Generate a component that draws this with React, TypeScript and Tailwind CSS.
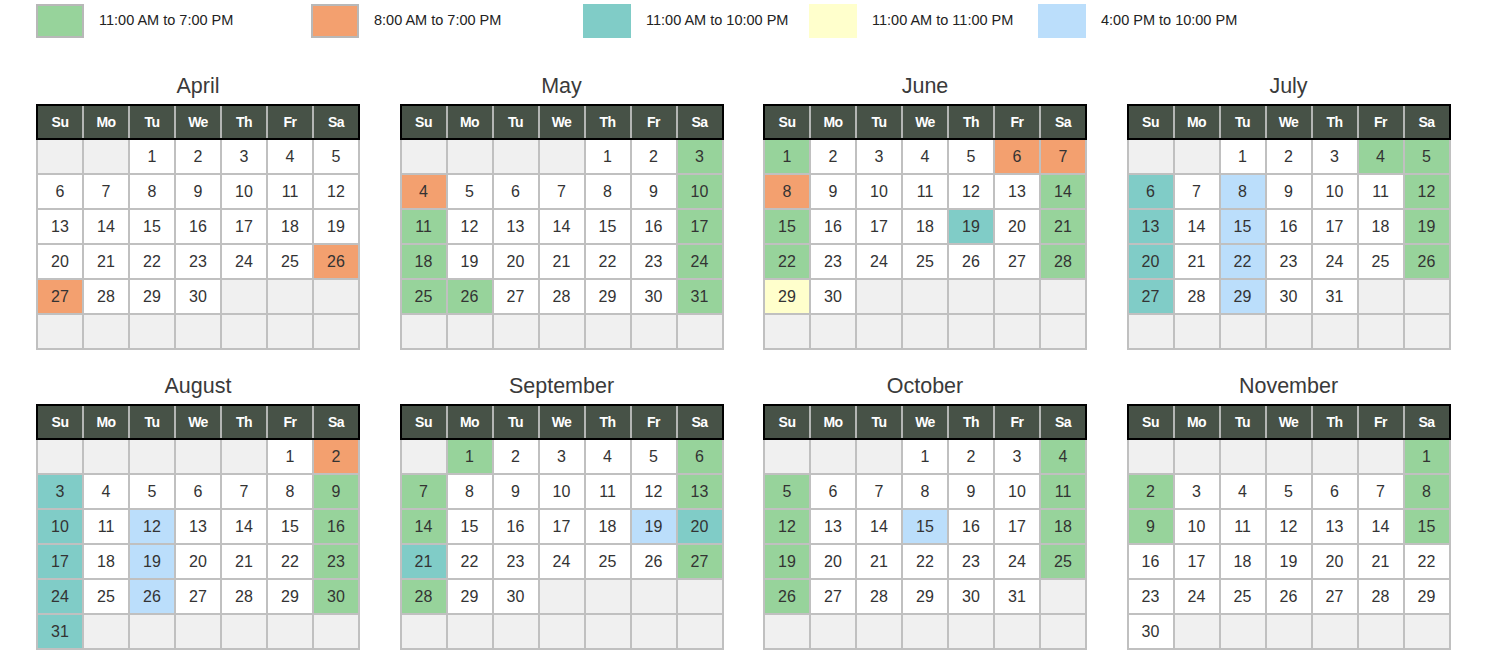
import React from "react";

type Slot = "G" | "O" | "T" | "Y" | "B";

const SLOT_BG: Record<Slot, string> = {
  G: "bg-[#97d39b]",
  O: "bg-[#f3a06f]",
  T: "bg-[#80ccc7]",
  Y: "bg-[#ffffcc]",
  B: "bg-[#bbdefb]",
};

const legend: { slot: Slot; label: string; width: string; bordered: boolean }[] = [
  { slot: "G", label: "11:00 AM to 7:00 PM", width: "w-[275px]", bordered: true },
  { slot: "O", label: "8:00 AM to 7:00 PM", width: "w-[272px]", bordered: true },
  { slot: "T", label: "11:00 AM to 10:00 PM", width: "w-[226px]", bordered: false },
  { slot: "Y", label: "11:00 AM to 11:00 PM", width: "w-[229px]", bordered: false },
  { slot: "B", label: "4:00 PM to 10:00 PM", width: "w-[260px]", bordered: false },
];

// month index (0-based) in 2025 -> highlighted days
const months: { name: string; index: number; marks: Record<number, Slot> }[] = [
  { name: "April", index: 3, marks: { 26: "O", 27: "O" } },
  {
    name: "May",
    index: 4,
    marks: { 3: "G", 4: "O", 10: "G", 11: "G", 17: "G", 18: "G", 24: "G", 25: "G", 26: "G", 31: "G" },
  },
  {
    name: "June",
    index: 5,
    marks: { 1: "G", 6: "O", 7: "O", 8: "O", 14: "G", 15: "G", 19: "T", 21: "G", 22: "G", 28: "G", 29: "Y" },
  },
  {
    name: "July",
    index: 6,
    marks: {
      4: "G", 5: "G", 6: "T", 8: "B", 12: "G", 13: "T", 15: "B", 19: "G",
      20: "T", 22: "B", 26: "G", 27: "T", 29: "B",
    },
  },
  {
    name: "August",
    index: 7,
    marks: {
      2: "O", 3: "T", 9: "G", 10: "T", 12: "B", 16: "G", 17: "T", 19: "B",
      23: "G", 24: "T", 26: "B", 30: "G", 31: "T",
    },
  },
  {
    name: "September",
    index: 8,
    marks: { 1: "G", 6: "G", 7: "G", 13: "G", 14: "G", 19: "B", 20: "T", 21: "T", 27: "G", 28: "G" },
  },
  {
    name: "October",
    index: 9,
    marks: { 4: "G", 5: "G", 11: "G", 12: "G", 15: "B", 18: "G", 19: "G", 25: "G", 26: "G" },
  },
  { name: "November", index: 10, marks: { 1: "G", 2: "G", 8: "G", 9: "G", 15: "G" } },
];

const weekdays = ["Su", "Mo", "Tu", "We", "Th", "Fr", "Sa"];

const MonthCalendar: React.FC<{ name: string; index: number; marks: Record<number, Slot> }> = ({
  name,
  index,
  marks,
}) => {
  const offset = new Date(2025, index, 1).getDay();
  const days = new Date(2025, index + 1, 0).getDate();
  const cells: (number | null)[] = [];
  for (let i = 0; i < 42; i++) {
    const d = i - offset + 1;
    cells.push(d >= 1 && d <= days ? d : null);
  }

  return (
    <div className="w-[324px]">
      <div className="h-[34px] flex items-center justify-center text-[21.5px] leading-none text-[#3a3a3a]">
        {name}
      </div>
      <div className="bg-black p-[2px]">
        <div className="grid grid-cols-7 gap-[2px] bg-[#b4b6b4]">
          {weekdays.map((w) => (
            <div
              key={w}
              className="h-[32px] bg-[#475247] flex items-center justify-center text-white font-bold text-[14px] tracking-[-0.5px]"
            >
              {w}
            </div>
          ))}
        </div>
      </div>
      <div className="grid grid-cols-7 gap-[2px] bg-[#c0c0c0] px-[2px] pb-[2px]">
        {cells.map((d, i) => {
          const bg = d === null ? "bg-[#f0f0f0]" : marks[d] ? SLOT_BG[marks[d]] : "bg-white";
          return (
            <div
              key={i}
              className={`h-[33px] flex items-center justify-center text-[16px] text-[#333] ${bg}`}
            >
              {d ?? ""}
            </div>
          );
        })}
      </div>
    </div>
  );
};

export default function App() {
  return (
    <div
      className="min-h-screen bg-white pt-[4px] pl-[36px]"
      style={{ fontFamily: '"Liberation Sans", Arial, sans-serif' }}
    >
      {/* Legend */}
      <div className="flex items-center">
        {legend.map((item) => (
          <div key={item.label} className={`flex items-center ${item.width}`}>
            <div
              className={`w-[48px] h-[34px] ${SLOT_BG[item.slot]} ${
                item.bordered ? "border-2 border-[#b8b8b8]" : ""
              }`}
            />
            <span className="ml-[15px] text-[14.5px] text-[#222]">{item.label}</span>
          </div>
        ))}
      </div>

      {/* Calendars */}
      <div className="grid grid-cols-[repeat(4,324px)] gap-x-[39.5px] gap-y-[20px] mt-[32px]">
        {months.map((m) => (
          <MonthCalendar key={m.name} name={m.name} index={m.index} marks={m.marks} />
        ))}
      </div>
    </div>
  );
}
